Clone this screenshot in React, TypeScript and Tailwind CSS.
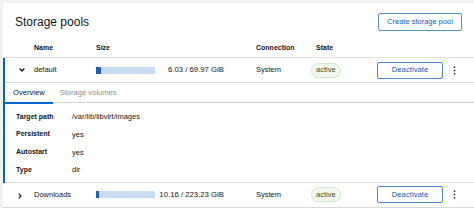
import React from 'react';

interface Pool {
  name: string;
  used: number;
  total: number;
  usage: string;
  expanded: boolean;
}

const pools: Pool[] = [
  { name: 'default', used: 6.03, total: 69.97, usage: '6.03 / 69.97 GiB', expanded: true },
  { name: 'Downloads', used: 10.16, total: 223.23, usage: '10.16 / 223.23 GiB', expanded: false },
];

const details = [
  ['Target path', '/var/lib/libvirt/images'],
  ['Persistent', 'yes'],
  ['Autostart', 'yes'],
  ['Type', 'dir'],
];

const Chevron = ({ open }: { open: boolean }) =>
  open ? (
    <svg width="6" height="4" viewBox="0 0 6 4" className="ml-[14px]">
      <polyline points="0.6,0.6 3,3 5.4,0.6" fill="none" stroke="#151515" strokeWidth="1.4" />
    </svg>
  ) : (
    <svg width="4" height="6" viewBox="0 0 4 6" className="ml-[15px] mt-[2px]">
      <polyline points="0.6,0.6 3,3 0.6,5.4" fill="none" stroke="#151515" strokeWidth="1.2" />
    </svg>
  );

const Kebab = () => (
  <svg width="3" height="9" viewBox="0 0 3 9" className="ml-[10px]">
    <circle cx="1.5" cy="1.2" r="0.9" fill="#333" />
    <circle cx="1.5" cy="4.5" r="0.9" fill="#333" />
    <circle cx="1.5" cy="7.8" r="0.9" fill="#333" />
  </svg>
);

const PoolRow = ({ pool, inner }: { pool: Pool; inner: boolean }) => {
  const pct = (pool.used / pool.total) * 100;
  return (
    <div className="flex items-center h-[25px] border-b border-[#d8d8d8] text-[7.5px] text-[#151515]">
      <div className={inner ? 'w-[29px] flex items-center' : 'w-[31px] flex items-center'}>
        <Chevron open={pool.expanded} />
      </div>
      <div className="w-[62px]">{pool.name}</div>
      <div className="w-[160px] flex items-center">
        <div className="w-[128px] flex items-center justify-between">
          <div className="w-[59px] h-[7px] bg-[#c8dcf2]">
            <div className="h-full bg-[#1e5fc4]" style={{ width: `${Math.max(pct, 3.5)}%` }} />
          </div>
          <span className="text-[7.75px]">{pool.usage}</span>
        </div>
      </div>
      <div className="w-[55px]">System</div>
      <div className="w-[66px]">
        <span className="inline-flex items-center h-[15px] px-[4px] rounded-full border border-[#cfe8c9] bg-[#f1f9ef] text-[#3b4a37]">
          active
        </span>
      </div>
      <button className="w-[66px] h-[17px] border border-[#4f86cc] rounded-[2px] text-[#0b5fbd] text-[7.75px] bg-white">
        Deactivate
      </button>
      <Kebab />
    </div>
  );
};

export default function App() {
  return (
    <div
      className="w-[474px] h-[208px] overflow-hidden bg-[#f0f0f0] pt-[3px] pl-[3px]"
      style={{ fontFamily: '"Liberation Sans", Arial, sans-serif' }}
    >
      <div className="bg-white h-full">
        <div className="flex items-center justify-between h-[28px] pt-[10px] pl-[12px] pr-[12px]">
          <h1 className="text-[12px] text-[#151515] leading-none">Storage pools</h1>
          <button className="w-[84px] h-[18px] border border-[#5a8ccd] rounded-[2px] text-[#0b5fbd] text-[7.5px] bg-white">
            Create storage pool
          </button>
        </div>

        <div className="flex items-end h-[27px] pb-[4px] border-b border-[#e2e2e2] text-[7px] font-bold text-[#151515]">
          <div className="w-[31px]" />
          <div className="w-[62px]">Name</div>
          <div className="w-[160px]">Size</div>
          <div className="w-[55px]">Connection</div>
          <div className="w-[66px] pl-[5px]">State</div>
        </div>

        <div className="border-l-2 border-[#0066cc]">
          <PoolRow pool={pools[0]} inner />
          <div className="border-b border-[#d8d8d8]">
            <div className="flex h-[20px] border-b-[1.5px] border-[#d2d2d2] text-[7.6px]">
              <div className="px-[8px] flex items-center text-[#151515] border-b-2 border-[#0066cc] -mb-[1.5px]">
                Overview
              </div>
              <div className="px-[7px] flex items-center text-[#8a8d90]">Storage volumes</div>
            </div>
            <div className="pt-[5px] pb-[3px] text-[7.5px] text-[#151515]">
              {details.map(([k, v]) => (
                <div key={k} className="flex items-center h-[17.7px]">
                  <div className="w-[67px] pl-[11px] text-[7px] font-bold">{k}</div>
                  <div>{v}</div>
                </div>
              ))}
            </div>
          </div>
        </div>

        <PoolRow pool={pools[1]} inner={false} />
      </div>
    </div>
  );
}
